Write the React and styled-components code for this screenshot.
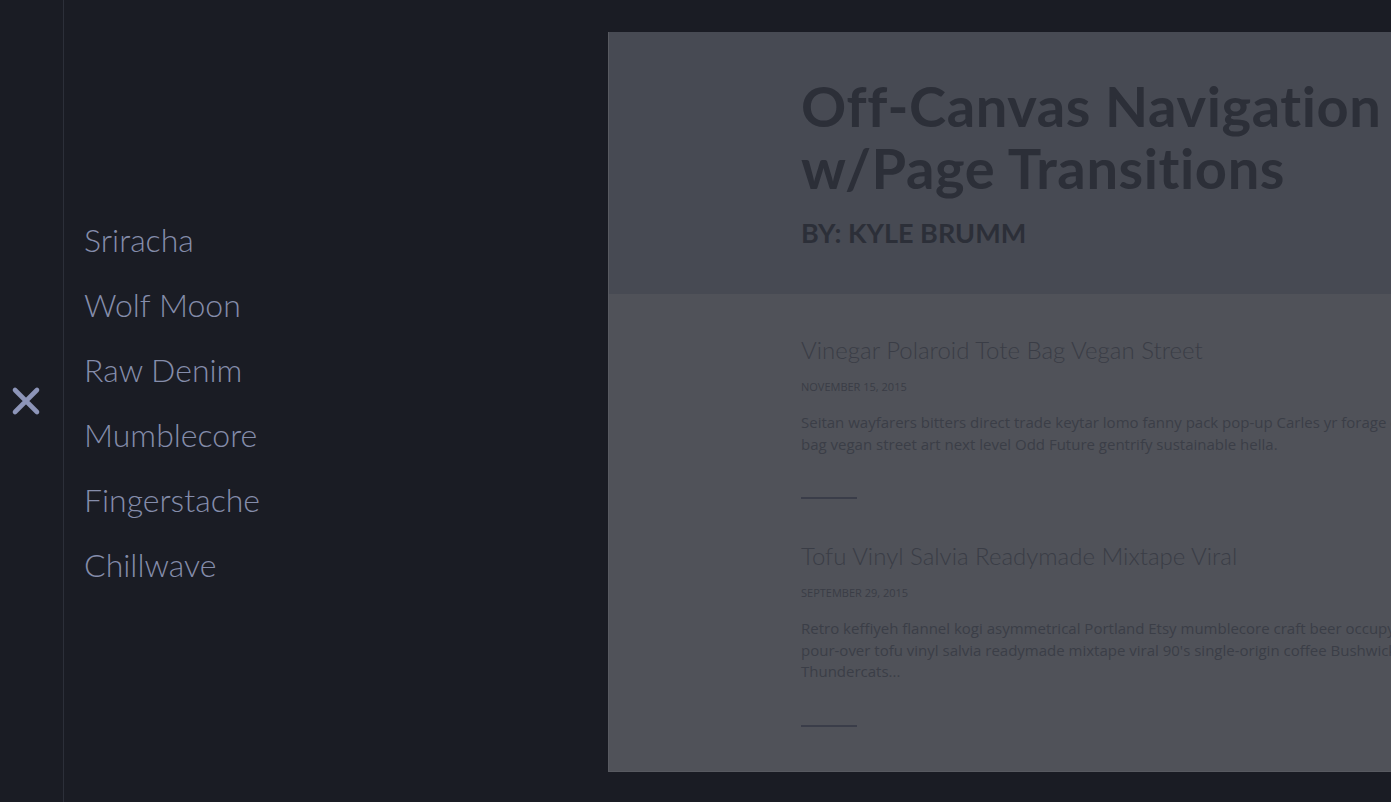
import React from "react";
import styled, { createGlobalStyle } from "styled-components";

const Global = createGlobalStyle`
  html, body { margin: 0; padding: 0; background: #1a1c24; }
  * { box-sizing: border-box; }
`;

const Shell = styled.div`
  display: flex;
  height: 100vh;
  width: 100vw;
  overflow: hidden;
  background: #1a1c24;
`;

const Rail = styled.div`
  flex: 0 0 64px;
  border-right: 1px solid #2c2f39;
  display: flex;
  align-items: center;
  justify-content: flex-start;
  padding-left: 10px;
  padding-bottom: 1px;
`;

const CloseButton = styled.button`
  background: none;
  border: 0;
  padding: 0;
  cursor: pointer;
  display: flex;
  color: #8d95b9;
`;

const Menu = styled.nav`
  flex: 0 0 544px;
  display: flex;
  flex-direction: column;
  justify-content: center;
  padding-left: 20px;
  padding-top: 1px;
`;

const MenuLink = styled.a`
  display: block;
  font-family: "Lato", "Noto Sans", sans-serif;
  font-weight: 300;
  font-size: 32px;
  line-height: 65px;
  color: #858dab;
  text-decoration: none;
`;

const Stage = styled.div`
  flex: 1 0 auto;
  padding: 32px 0 30px 0;
  display: flex;
`;

const Panel = styled.main`
  width: 1000px;
  display: flex;
  flex-direction: column;
  background: #505259;
  border-left: 1px solid #585a61;
  border-bottom: 1px solid #585a61;
`;

const Header = styled.header`
  height: 262px;
  background: #474a53;
  padding: 43px 0 0 192px;
`;

const Title = styled.h1`
  margin: 0;
  font-family: "Lato", "Noto Sans", sans-serif;
  font-weight: 700;
  font-size: 56px;
  line-height: 62px;
  letter-spacing: 0.6px;
  color: #2c2f38;
`;

const Byline = styled.h2`
  margin: 18px 0 0;
  font-family: "Lato", "Noto Sans", sans-serif;
  font-weight: 700;
  font-size: 27px;
  line-height: 32px;
  color: #2c2f38;
`;

const Posts = styled.section`
  padding: 41px 0 0 192px;
  width: 902px;
`;

const Post = styled.article`
  margin-bottom: 42px;
`;

const PostTitle = styled.h3`
  margin: 0;
  font-family: "Lato", "Noto Sans", sans-serif;
  font-weight: 300;
  font-size: 24px;
  line-height: 30px;
  color: #3a3d46;
`;

const PostDate = styled.div`
  margin-top: 15px;
  font-family: "Open Sans", "Noto Sans", sans-serif;
  font-size: 11px;
  line-height: 14px;
  color: #3a3d46;
  text-transform: uppercase;
`;

const PostBody = styled.p`
  margin: 18px 0 0;
  font-family: "Open Sans", "Noto Sans", sans-serif;
  font-size: 15px;
  line-height: 21.5px;
  color: #3b3e47;
`;

const Rule = styled.hr`
  width: 56px;
  height: 2px;
  border: 0;
  margin: 42px 0 0;
  background: #3a3d49;
`;

const items = ["Sriracha", "Wolf Moon", "Raw Denim", "Mumblecore", "Fingerstache", "Chillwave"];

const posts = [
  {
    title: "Vinegar Polaroid Tote Bag Vegan Street",
    date: "November 15, 2015",
    body: "Seitan wayfarers bitters direct trade keytar lomo fanny pack pop-up Carles yr forage distillery Tote bag vegan street art next level Odd Future gentrify sustainable hella.",
  },
  {
    title: "Tofu Vinyl Salvia Readymade Mixtape Viral",
    date: "September 29, 2015",
    body: "Retro keffiyeh flannel kogi asymmetrical Portland Etsy mumblecore craft beer occupy Williamsburg pour-over tofu vinyl salvia readymade mixtape viral 90's single-origin coffee Bushwick Echo Park Thundercats...",
  },
];

export default function App() {
  return (
    <>
      <Global />
      <Shell>
        <Rail>
          <CloseButton aria-label="Close menu">
            <svg width="32" height="32" viewBox="0 0 32 32">
              <path d="M5 5 L27 27 M27 5 L5 27" stroke="currentColor" strokeWidth="4.6" strokeLinecap="round" />
            </svg>
          </CloseButton>
        </Rail>
        <Menu>
          {items.map((item) => (
            <MenuLink key={item} href="#">{item}</MenuLink>
          ))}
        </Menu>
        <Stage>
          <Panel>
            <Header>
              <Title>
                Off-Canvas Navigation
                <br />
                w/Page Transitions
              </Title>
              <Byline>BY: KYLE BRUMM</Byline>
            </Header>
            <Posts>
              {posts.map((p) => (
                <Post key={p.title}>
                  <PostTitle>{p.title}</PostTitle>
                  <PostDate>{p.date}</PostDate>
                  <PostBody>{p.body}</PostBody>
                  <Rule />
                </Post>
              ))}
            </Posts>
          </Panel>
        </Stage>
      </Shell>
    </>
  );
}
